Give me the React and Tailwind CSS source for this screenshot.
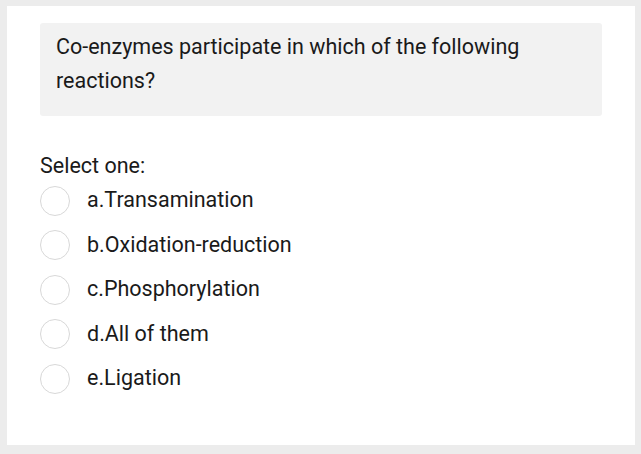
export default function App() {
  const options = [
    'a.Transamination',
    'b.Oxidation-reduction',
    'c.Phosphorylation',
    'd.All of them',
    'e.Ligation',
  ];

  return (
    <div className="w-[641px] h-[454px] bg-[#ececec] pt-[6px] pl-[7px] pr-[6px] pb-[9px] font-['Roboto',sans-serif] text-[#1a1a1a]">
      <div className="h-full bg-white px-[33px] pt-[17px]">
        <div className="bg-[#f2f2f2] rounded-[3px] h-[93px] pl-4 pr-4 pt-[7px] text-[21.5px] leading-[34px]">
          Co-enzymes participate in which of the following reactions?
        </div>
        <div className="mt-[35px] text-[21.5px] leading-[30px]">Select one:</div>
        <div className="mt-[4.5px] flex flex-col gap-[14.5px]">
          {options.map((o) => (
            <label key={o} className="flex items-center h-[30px]">
              <span className="w-[30px] h-[30px] rounded-full border-[1.5px] border-[#d8d8d8] bg-white shrink-0" />
              <span className="ml-[17px] text-[21.5px]">{o}</span>
            </label>
          ))}
        </div>
      </div>
    </div>
  );
}
